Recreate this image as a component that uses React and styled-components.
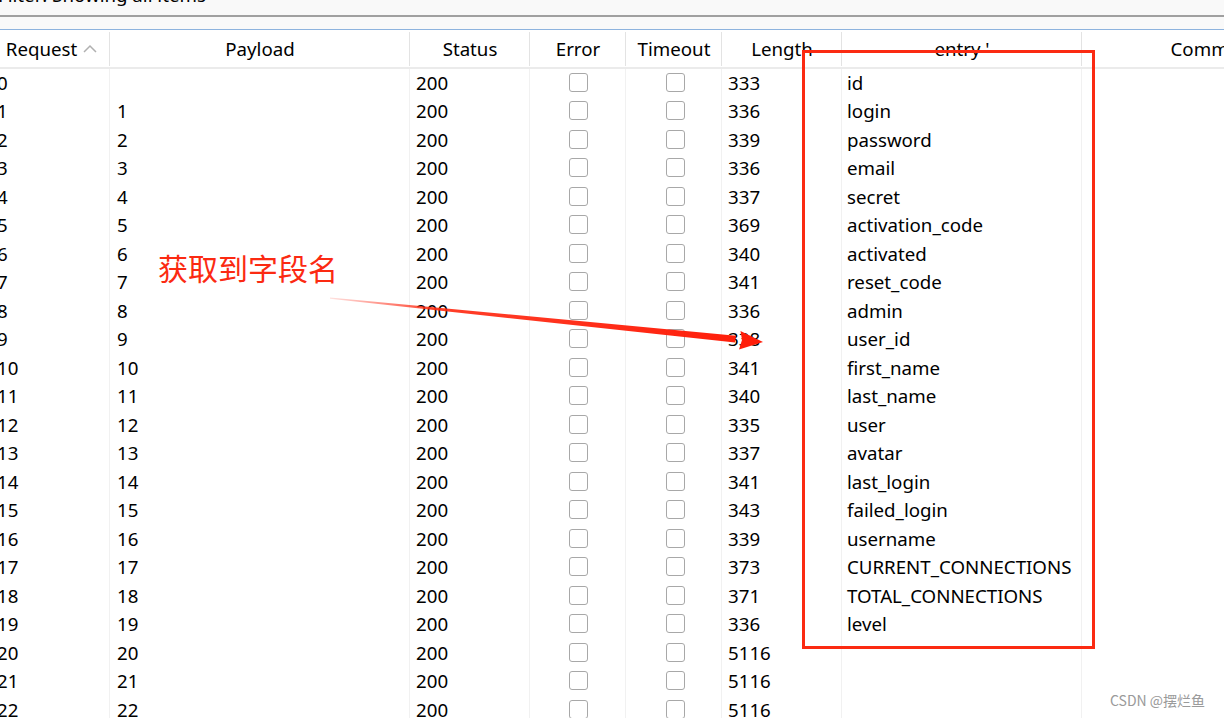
import React from "react";
import styled, { createGlobalStyle } from "styled-components";

const GlobalStyle = createGlobalStyle`
  html, body { margin: 0; padding: 0; background: #fff; overflow: hidden; }
  body { font-family: "Noto Sans", "Noto Sans CJK SC", sans-serif; color: #000; }
`;

const Page = styled.div`
  position: relative;
  width: 1224px;
  height: 718px;
  overflow: hidden;
  background: #fff;
  font-size: 18.7px;
`;

const FilterBar = styled.div`
  height: 15px;
  background: #f9f9f9;
  border-bottom: 2px solid #a0a0a0;
  display: flex;
  align-items: flex-end;
  overflow: hidden;
`;

const FilterText = styled.span`
  line-height: 1;
  margin-bottom: 10px;
  margin-left: -2px;
  white-space: nowrap;
`;

const Strip = styled.div`
  height: 12px;
  background: #f9f9f9;
  border-bottom: 1px solid #8db3de;
`;

const Table = styled.div`
  margin-left: -7px;
`;

const HeaderRow = styled.div`
  display: flex;
  height: 37px;
  border-bottom: 2px solid #ebebeb;
  background: #fff;
`;

const HeaderCell = styled.div`
  position: relative;
  flex: 0 0 ${(p) => p.$w}px;
  width: ${(p) => p.$w}px;
  display: flex;
  align-items: center;
  justify-content: center;
  gap: 6px;
  white-space: nowrap;
  &::after {
    content: "";
    display: ${(p) => (p.$last ? "none" : "block")};
    position: absolute;
    right: 0;
    top: 2px;
    bottom: 1px;
    width: 1px;
    background: #e3e3e3;
  }
`;

const Body = styled.div`
  display: flex;
  flex-direction: column;
`;

const Row = styled.div`
  display: flex;
  height: 28.5px;
  flex: 0 0 28.5px;
`;

const Cell = styled.div`
  flex: 0 0 ${(p) => p.$w}px;
  width: ${(p) => p.$w}px;
  box-sizing: border-box;
  border-right: ${(p) => (p.$last ? "none" : "1px solid #f1f1f1")};
  padding-left: ${(p) => p.$pad ?? 6}px;
  padding-bottom: 2px;
  display: flex;
  align-items: center;
  justify-content: ${(p) => (p.$center ? "center" : "flex-start")};
  white-space: nowrap;
  overflow: hidden;
`;

const Check = styled.span`
  display: inline-block;
  width: 19px;
  height: 19px;
  box-sizing: border-box;
  border: 1.5px solid #a8a8a8;
  border-radius: 3px;
  background: #fff;
  margin-left: ${(p) => p.$shift || 0}px;
`;

const Overlay = styled.svg`
  position: absolute;
  left: 0;
  top: 0;
  pointer-events: none;
`;

const Highlight = styled.div`
  position: absolute;
  left: 802px;
  top: 50px;
  width: 293px;
  height: 599px;
  box-sizing: border-box;
  border: 3px solid #fb2a12;
  pointer-events: none;
`;

const Note = styled.div`
  position: absolute;
  left: 158px;
  top: 248px;
  font-family: "Noto Sans CJK SC", sans-serif;
  font-size: 30px;
  line-height: 1.3;
  color: #fb2a12;
`;

const Watermark = styled.div`
  position: absolute;
  left: 1110px;
  top: 690px;
  font-family: "Noto Sans CJK SC", "Noto Sans", sans-serif;
  font-size: 14px;
  color: #9a9a9a;
  white-space: nowrap;
`;

const cols = [
  { key: "req", title: "Request", w: 117 },
  { key: "payload", title: "Payload", w: 300 },
  { key: "status", title: "Status", w: 120 },
  { key: "error", title: "Error", w: 96 },
  { key: "timeout", title: "Timeout", w: 96 },
  { key: "length", title: "Length", w: 120 },
  { key: "entry", title: "entry '", w: 240 },
  { key: "comment", title: "Comment", w: 264 },
];

const lengths = [333, 336, 339, 336, 337, 369, 340, 341, 336, 338, 341, 340, 335, 337, 341, 343, 339, 373, 371, 336, 5116, 5116, 5116];
const entries = [
  "id", "login", "password", "email", "secret", "activation_code", "activated", "reset_code",
  "admin", "user_id", "first_name", "last_name", "user", "avatar", "last_login", "failed_login",
  "username", "CURRENT_CONNECTIONS", "TOTAL_CONNECTIONS", "level",
];

const rows = lengths.map((len, i) => ({
  req: String(i),
  payload: i === 0 ? "" : String(i),
  status: "200",
  length: String(len),
  entry: entries[i] || "",
}));

const SortArrow = () => (
  <svg width="14" height="9" viewBox="0 0 14 9">
    <path d="M1 8 L7 2 L13 8" fill="none" stroke="#b0b0b0" strokeWidth="1.5" />
  </svg>
);

export default function App() {
  return (
    <>
      <GlobalStyle />
      <Page>
        <FilterBar>
          <FilterText>Filter: Showing all items</FilterText>
        </FilterBar>
        <Strip />
        <Table>
          <HeaderRow>
            {cols.map((c, i) => (
              <HeaderCell key={c.key} $w={c.w} $last={i === cols.length - 1}>
                {c.title}
                {c.key === "req" && <SortArrow />}
              </HeaderCell>
            ))}
          </HeaderRow>
          <Body>
            {rows.map((r, i) => (
              <Row key={i}>
                <Cell $w={117} $pad={4}>{r.req}</Cell>
                <Cell $w={300} $pad={7}>{r.payload}</Cell>
                <Cell $w={120}>{r.status}</Cell>
                <Cell $w={96} $center $pad={0}><Check $shift={2} /></Cell>
                <Cell $w={96} $center $pad={0}><Check $shift={4} /></Cell>
                <Cell $w={120}>{r.length}</Cell>
                <Cell $w={240} $pad={5}>{r.entry}</Cell>
                <Cell $w={264} $last />
              </Row>
            ))}
          </Body>
        </Table>

        <Highlight />
        <Note>获取到字段名</Note>
        <Overlay width="1224" height="718" viewBox="0 0 1224 718">
          <defs>
            <linearGradient id="shaft" x1="330" y1="298" x2="740" y2="340" gradientUnits="userSpaceOnUse">
              <stop offset="0" stopColor="#ff3b2a" stopOpacity="0.15" />
              <stop offset="0.25" stopColor="#ff2a12" stopOpacity="0.9" />
              <stop offset="1" stopColor="#ff1e0a" stopOpacity="1" />
            </linearGradient>
          </defs>
          <polygon points="330,297.6 736,335.8 735,342.6 330,298.8" fill="url(#shaft)" />
          <polygon points="740.5,331 763,342 739,349.5 742,340" fill="#ff1e0a" />
        </Overlay>
        <Watermark>CSDN @摆烂鱼</Watermark>
      </Page>
    </>
  );
}
